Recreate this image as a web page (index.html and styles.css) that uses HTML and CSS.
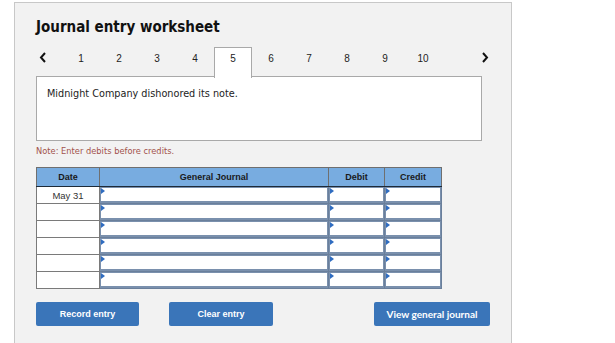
FILE: index.html
```html
<!DOCTYPE html>
<html>

<head>
    <meta name="viewport" content="width=device-width, initial-scale=1.0">
    <link rel="stylesheet" href="styles.css">
</head>

<body>
    <div class="worksheet">
        <h1 class="title">Journal entry worksheet</h1>

        <div class="steps">
            <span class="arrow">
                <svg width="8" height="11" viewBox="0 0 8 11"><path d="M6 1 L2 5.5 L6 10" fill="none" stroke="#111" stroke-width="2"/></svg>
            </span>
            <span class="step">1</span>
            <span class="step">2</span>
            <span class="step">3</span>
            <span class="step">4</span>
            <span class="step active">5</span>
            <span class="step">6</span>
            <span class="step">7</span>
            <span class="step">8</span>
            <span class="step">9</span>
            <span class="step">10</span>
            <span class="arrow next">
                <svg width="8" height="11" viewBox="0 0 8 11"><path d="M2 1 L6 5.5 L2 10" fill="none" stroke="#111" stroke-width="2"/></svg>
            </span>
        </div>

        <div class="question">Midnight Company dishonored its note.</div>

        <p class="note">Note: Enter debits before credits.</p>

        <table class="journal">
            <thead>
                <tr>
                    <th class="col-date">Date</th>
                    <th class="col-account">General Journal</th>
                    <th class="col-debit">Debit</th>
                    <th class="col-credit">Credit</th>
                </tr>
            </thead>
            <tbody>
                <tr>
                    <td class="date">May 31</td>
                    <td class="entry"><div class="field"></div></td>
                    <td class="entry"><div class="field"></div></td>
                    <td class="entry"><div class="field"></div></td>
                </tr>
                <tr>
                    <td class="date"></td>
                    <td class="entry"><div class="field"></div></td>
                    <td class="entry"><div class="field"></div></td>
                    <td class="entry"><div class="field"></div></td>
                </tr>
                <tr>
                    <td class="date"></td>
                    <td class="entry"><div class="field"></div></td>
                    <td class="entry"><div class="field"></div></td>
                    <td class="entry"><div class="field"></div></td>
                </tr>
                <tr>
                    <td class="date"></td>
                    <td class="entry"><div class="field"></div></td>
                    <td class="entry"><div class="field"></div></td>
                    <td class="entry"><div class="field"></div></td>
                </tr>
                <tr>
                    <td class="date"></td>
                    <td class="entry"><div class="field"></div></td>
                    <td class="entry"><div class="field"></div></td>
                    <td class="entry"><div class="field"></div></td>
                </tr>
                <tr>
                    <td class="date"></td>
                    <td class="entry"><div class="field"></div></td>
                    <td class="entry"><div class="field"></div></td>
                    <td class="entry"><div class="field"></div></td>
                </tr>
            </tbody>
        </table>

        <div class="actions">
            <button class="btn">Record entry</button>
            <button class="btn clear">Clear entry</button>
            <button class="btn view">View general journal</button>
        </div>
    </div>
</body>

</html>
```

FILE: styles.css
```css
* {
    box-sizing: border-box;
}

body {
    margin: 0;
    padding: 2px 0 0 14px;
    background: #fff;
    font-family: 'Liberation Sans', Arial, sans-serif;
    color: #222;
}

.worksheet {
    width: 498px;
    min-height: 360px;
    background: #f2f2f2;
    border: 1px solid #c8c8c8;
    padding: 15px 0 0 21px;
}

.title {
    margin: 0;
    font-family: 'DejaVu Sans Condensed', 'DejaVu Sans', sans-serif;
    font-stretch: condensed;
    font-size: 15px;
    font-weight: bold;
    line-height: 18px;
    color: #111;
}

.steps {
    display: flex;
    align-items: flex-start;
    margin-top: 11px;
    height: 30px;
    font-size: 10px;
    color: #222;
}

.arrow {
    width: 26px;
    padding: 5px 0 0 3px;
}

.arrow.next {
    margin-left: 36px;
}

.step {
    width: 38px;
    height: 30px;
    line-height: 23px;
    text-align: center;
}

.step.active {
    background: #fff;
    border: 1px solid #a9a9a9;
    border-bottom: none;
    height: 31px;
    line-height: 21px;
    position: relative;
    z-index: 1;
}

.question {
    width: 446px;
    height: 65px;
    margin-top: -1px;
    background: #fff;
    border: 1px solid #a9a9a9;
    padding: 11px 10px;
    font-family: 'DejaVu Sans', Verdana, sans-serif;
    font-size: 9.7px;
    color: #222;
}

.note {
    margin: 5px 0 0;
    font-family: 'DejaVu Sans', Verdana, sans-serif;
    font-size: 8.3px;
    line-height: 10px;
    color: #a2524c;
}

.journal {
    margin-top: 11px;
    border-collapse: collapse;
    font-size: 9px;
}

.journal th {
    height: 19px;
    background: #78ace0;
    border: 1px solid #6f6f6f;
    border-bottom: 1px solid #1d2a38;
    font-weight: bold;
    color: #1a1a1a;
    padding: 0;
}

.col-date {
    width: 63px;
}

.col-account {
    width: 229px;
}

.col-debit {
    width: 56px;
}

.col-credit {
    width: 57px;
}

.journal td {
    height: 17px;
    padding: 0;
}

.journal .date {
    background: #fff;
    border: 1px solid #7a7a7a;
    text-align: center;
    font-size: 9.5px;
    color: #333;
}

.journal .entry {
    border: 1px solid #6a7f9b;
    border-left-color: #3b4654;
    background: #fff;
}

.field {
    position: relative;
    height: 16px;
    border: 1px solid #7a90ad;
    border-bottom-width: 2px;
    background: #fff;
}

.field::before {
    content: '';
    position: absolute;
    top: 0;
    left: 0;
    border-top: 3px solid transparent;
    border-bottom: 3px solid transparent;
    border-left: 4px solid #2f6cc0;
}

.actions {
    display: flex;
    margin-top: 13px;
}

.btn {
    height: 24px;
    width: 103px;
    background: #3a75b9;
    border: none;
    border-radius: 2px;
    color: #fff;
    font-family: 'Liberation Sans', Arial, sans-serif;
    font-size: 9px;
    font-weight: bold;
    padding: 0;
}

.btn.clear {
    margin-left: 30px;
    width: 104px;
}

.btn.view {
    margin-left: 101px;
    width: 116px;
    font-family: Lato, 'Open Sans', sans-serif;
    font-size: 10px;
}
```
